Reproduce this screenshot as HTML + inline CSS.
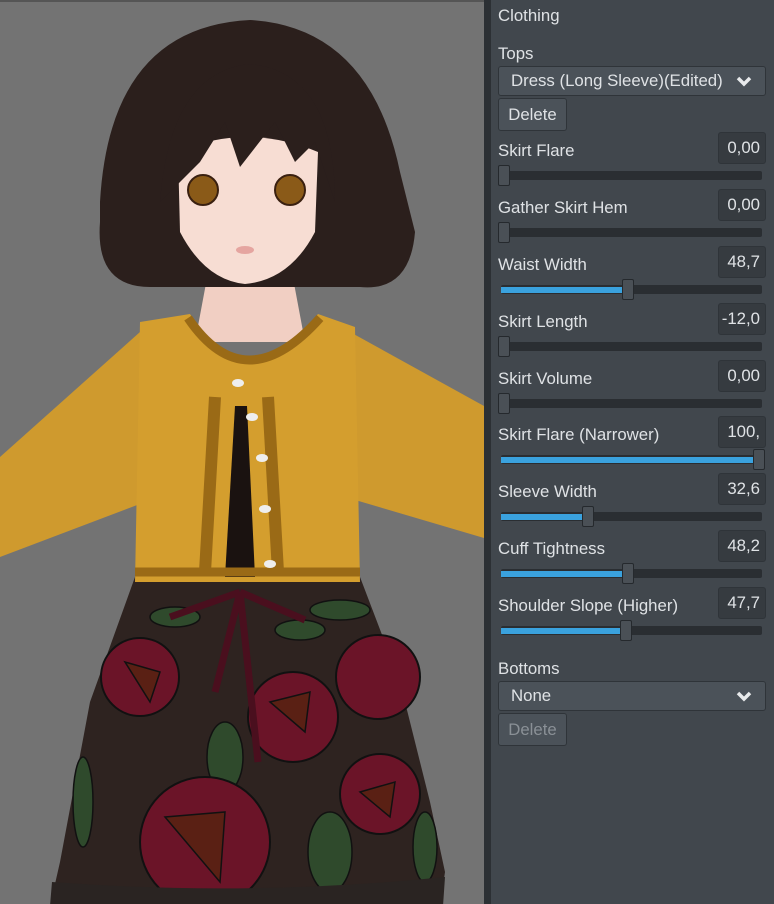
<!DOCTYPE html>
<html><head><meta charset="utf-8"><style>
*{margin:0;padding:0;box-sizing:border-box}
html,body{width:774px;height:904px;overflow:hidden}
body{background:#727272;font-family:"Liberation Sans","DejaVu Sans",sans-serif;position:relative}
#vp{position:absolute;left:0;top:0;width:484px;height:904px;background:#737373;border-top:2px solid #555}
#div{position:absolute;left:484px;top:0;width:7px;height:904px;background:#2c3034}
#panel{position:absolute;left:491px;top:0;width:283px;height:904px;background:#41474d;color:#dfe2e5;font-size:16.8px}
.t{position:absolute;left:7px;white-space:nowrap}
.dd{position:absolute;left:7px;width:268px;height:30px;background:#4b5259;border:1px solid #2f3439;border-radius:3px;padding-left:12px;line-height:28px}
.btn{position:absolute;left:7px;width:69px;height:33px;background:#4b5259;border:1px solid #2f3439;border-radius:3px;text-align:center;line-height:31px}
.val{position:absolute;left:227px;width:48px;height:32px;background:#363b40;border:1px solid #2f3439;border-radius:3px;text-align:right;padding-right:5px;line-height:30px}
.tr{position:absolute;left:10px;width:261px;height:9px;background:#2a2e32;border-radius:2px}
.fill{position:absolute;left:0;top:2px;height:6px;background:#3aa2de}
.th{position:absolute;top:-6px;width:12px;height:21px;background:#4a5056;border:1px solid #25292d;border-radius:2px}
.chev{position:absolute;right:13px;top:8px}
</style></head><body>
<div id="vp">
<svg width="484" height="904" viewBox="0 0 484 904">
<path d="M135 575 L360 575 L400 680 L430 800 L445 870 L440 904 L50 904 L60 860 L90 700 Z" fill="#2e2320"/>
<g fill="#2f4a2c" stroke="#111" stroke-width="1.5">
<ellipse cx="175" cy="615" rx="25" ry="10"/><ellipse cx="340" cy="608" rx="30" ry="10"/><ellipse cx="225" cy="755" rx="18" ry="35"/><ellipse cx="83" cy="800" rx="10" ry="45"/><ellipse cx="330" cy="850" rx="22" ry="40"/><ellipse cx="425" cy="845" rx="12" ry="35"/><ellipse cx="300" cy="628" rx="25" ry="10"/>
</g>
<g fill="#6b1428" stroke="#111" stroke-width="2">
<circle cx="140" cy="675" r="39"/><circle cx="378" cy="675" r="42"/><circle cx="293" cy="715" r="45"/><circle cx="380" cy="792" r="40"/><circle cx="205" cy="840" r="65"/>
</g>
<g fill="#5a2014" stroke="#111" stroke-width="1.5">
<path d="M125 660 L160 670 L150 700 Z"/><path d="M165 815 L225 810 L220 880 Z"/><path d="M270 700 L310 690 L305 730 Z"/><path d="M360 790 L395 780 L390 815Z"/>
</g>
<path d="M52 880 Q250 895 445 875 L443 904 L50 904Z" fill="#2a2422"/>
<path d="M0 455 L140 330 L145 500 L0 555 Z" fill="#cf9a2e"/>
<path d="M484 404 L350 330 L345 495 L484 536 Z" fill="#cf9a2e"/>
<path d="M210 260 L290 260 L305 340 L195 340 Z" fill="#f1cfc3"/>
<path d="M140 320 L190 312 Q245 400 318 312 L355 325 L360 580 L135 580 Z" fill="#d49e2e"/>
<path d="M235 404 L247 404 L255 575 L225 575 Z" fill="#1a1210"/>
<path d="M188 316 Q245 400 320 316" fill="none" stroke="#9a6a16" stroke-width="9"/>
<path d="M215 395 L205 570 M268 395 L278 570" stroke="#9a6a16" stroke-width="12"/>
<path d="M135 570 L360 570" stroke="#9a6a16" stroke-width="9"/>
<g fill="#eee"><ellipse cx="238" cy="381" rx="6" ry="4"/><ellipse cx="252" cy="415" rx="6" ry="4"/><ellipse cx="262" cy="456" rx="6" ry="4"/><ellipse cx="265" cy="507" rx="6" ry="4"/><ellipse cx="270" cy="562" rx="6" ry="4"/></g>
<path d="M240 590 L170 615 M240 590 L305 618 M240 590 L215 690 M240 590 L258 760" stroke="#4a0f1e" stroke-width="7"/>
<path d="M100 200 Q110 25 250 18 Q370 25 400 170 L415 230 Q410 290 360 285 L150 285 Q95 285 100 220Z" fill="#2b1f1c"/>
<path d="M178 150 Q245 120 318 150 L315 230 Q290 278 245 282 Q205 278 180 230 Z" fill="#f7ddd3"/>
<path d="M160 200 Q170 70 250 62 Q335 70 335 200 L315 140 L295 160 L275 120 L240 165 L225 120 L200 160 Z" fill="#2b1f1c"/>
<g fill="#8a5a18" stroke="#3a2010" stroke-width="2"><ellipse cx="203" cy="188" rx="15" ry="15"/><ellipse cx="290" cy="188" rx="15" ry="15"/></g>
<ellipse cx="245" cy="248" rx="9" ry="4" fill="#e5a5a0"/>
</svg>
</div>
<div id="div"></div>
<div id="panel">
<div class="t" style="top:6px">Clothing</div>
<div class="t" style="top:44px">Tops</div>
<div class="dd" style="top:66px">Dress (Long Sleeve)(Edited)<svg class="chev" width="16" height="12" viewBox="0 0 16 12"><path d="M2 3 L8 9 L14 3" stroke="#e8eaec" stroke-width="3.5" fill="none"/></svg></div>
<div class="btn" style="top:98px">Delete</div>
<div class="t" style="top:141px">Skirt Flare</div><div class="val" style="top:132px">0,00</div>
<div class="tr" style="top:171px"><div class="th" style="left:-3px"></div></div>
<div class="t" style="top:198px">Gather Skirt Hem</div><div class="val" style="top:189px">0,00</div>
<div class="tr" style="top:228px"><div class="th" style="left:-3px"></div></div>
<div class="t" style="top:255px">Waist Width</div><div class="val" style="top:246px">48,7</div>
<div class="tr" style="top:285px"><div class="fill" style="width:128px"></div><div class="th" style="left:121px"></div></div>
<div class="t" style="top:312px">Skirt Length</div><div class="val" style="top:303px">-12,0</div>
<div class="tr" style="top:342px"><div class="th" style="left:-3px"></div></div>
<div class="t" style="top:369px">Skirt Volume</div><div class="val" style="top:360px">0,00</div>
<div class="tr" style="top:399px"><div class="th" style="left:-3px"></div></div>
<div class="t" style="top:425px">Skirt Flare (Narrower)</div><div class="val" style="top:416px">100,</div>
<div class="tr" style="top:455px"><div class="fill" style="width:256px"></div><div class="th" style="left:252px"></div></div>
<div class="t" style="top:482px">Sleeve Width</div><div class="val" style="top:473px">32,6</div>
<div class="tr" style="top:512px"><div class="fill" style="width:85px"></div><div class="th" style="left:81px"></div></div>
<div class="t" style="top:539px">Cuff Tightness</div><div class="val" style="top:530px">48,2</div>
<div class="tr" style="top:569px"><div class="fill" style="width:125px"></div><div class="th" style="left:121px"></div></div>
<div class="t" style="top:596px">Shoulder Slope (Higher)</div><div class="val" style="top:587px">47,7</div>
<div class="tr" style="top:626px"><div class="fill" style="width:123px"></div><div class="th" style="left:119px"></div></div>
<div class="t" style="top:659px">Bottoms</div>
<div class="dd" style="top:681px">None<svg class="chev" width="16" height="12" viewBox="0 0 16 12"><path d="M2 3 L8 9 L14 3" stroke="#e8eaec" stroke-width="3.5" fill="none"/></svg></div>
<div class="btn" style="top:713px;color:#8a9096">Delete</div>
</div>
</body></html>
